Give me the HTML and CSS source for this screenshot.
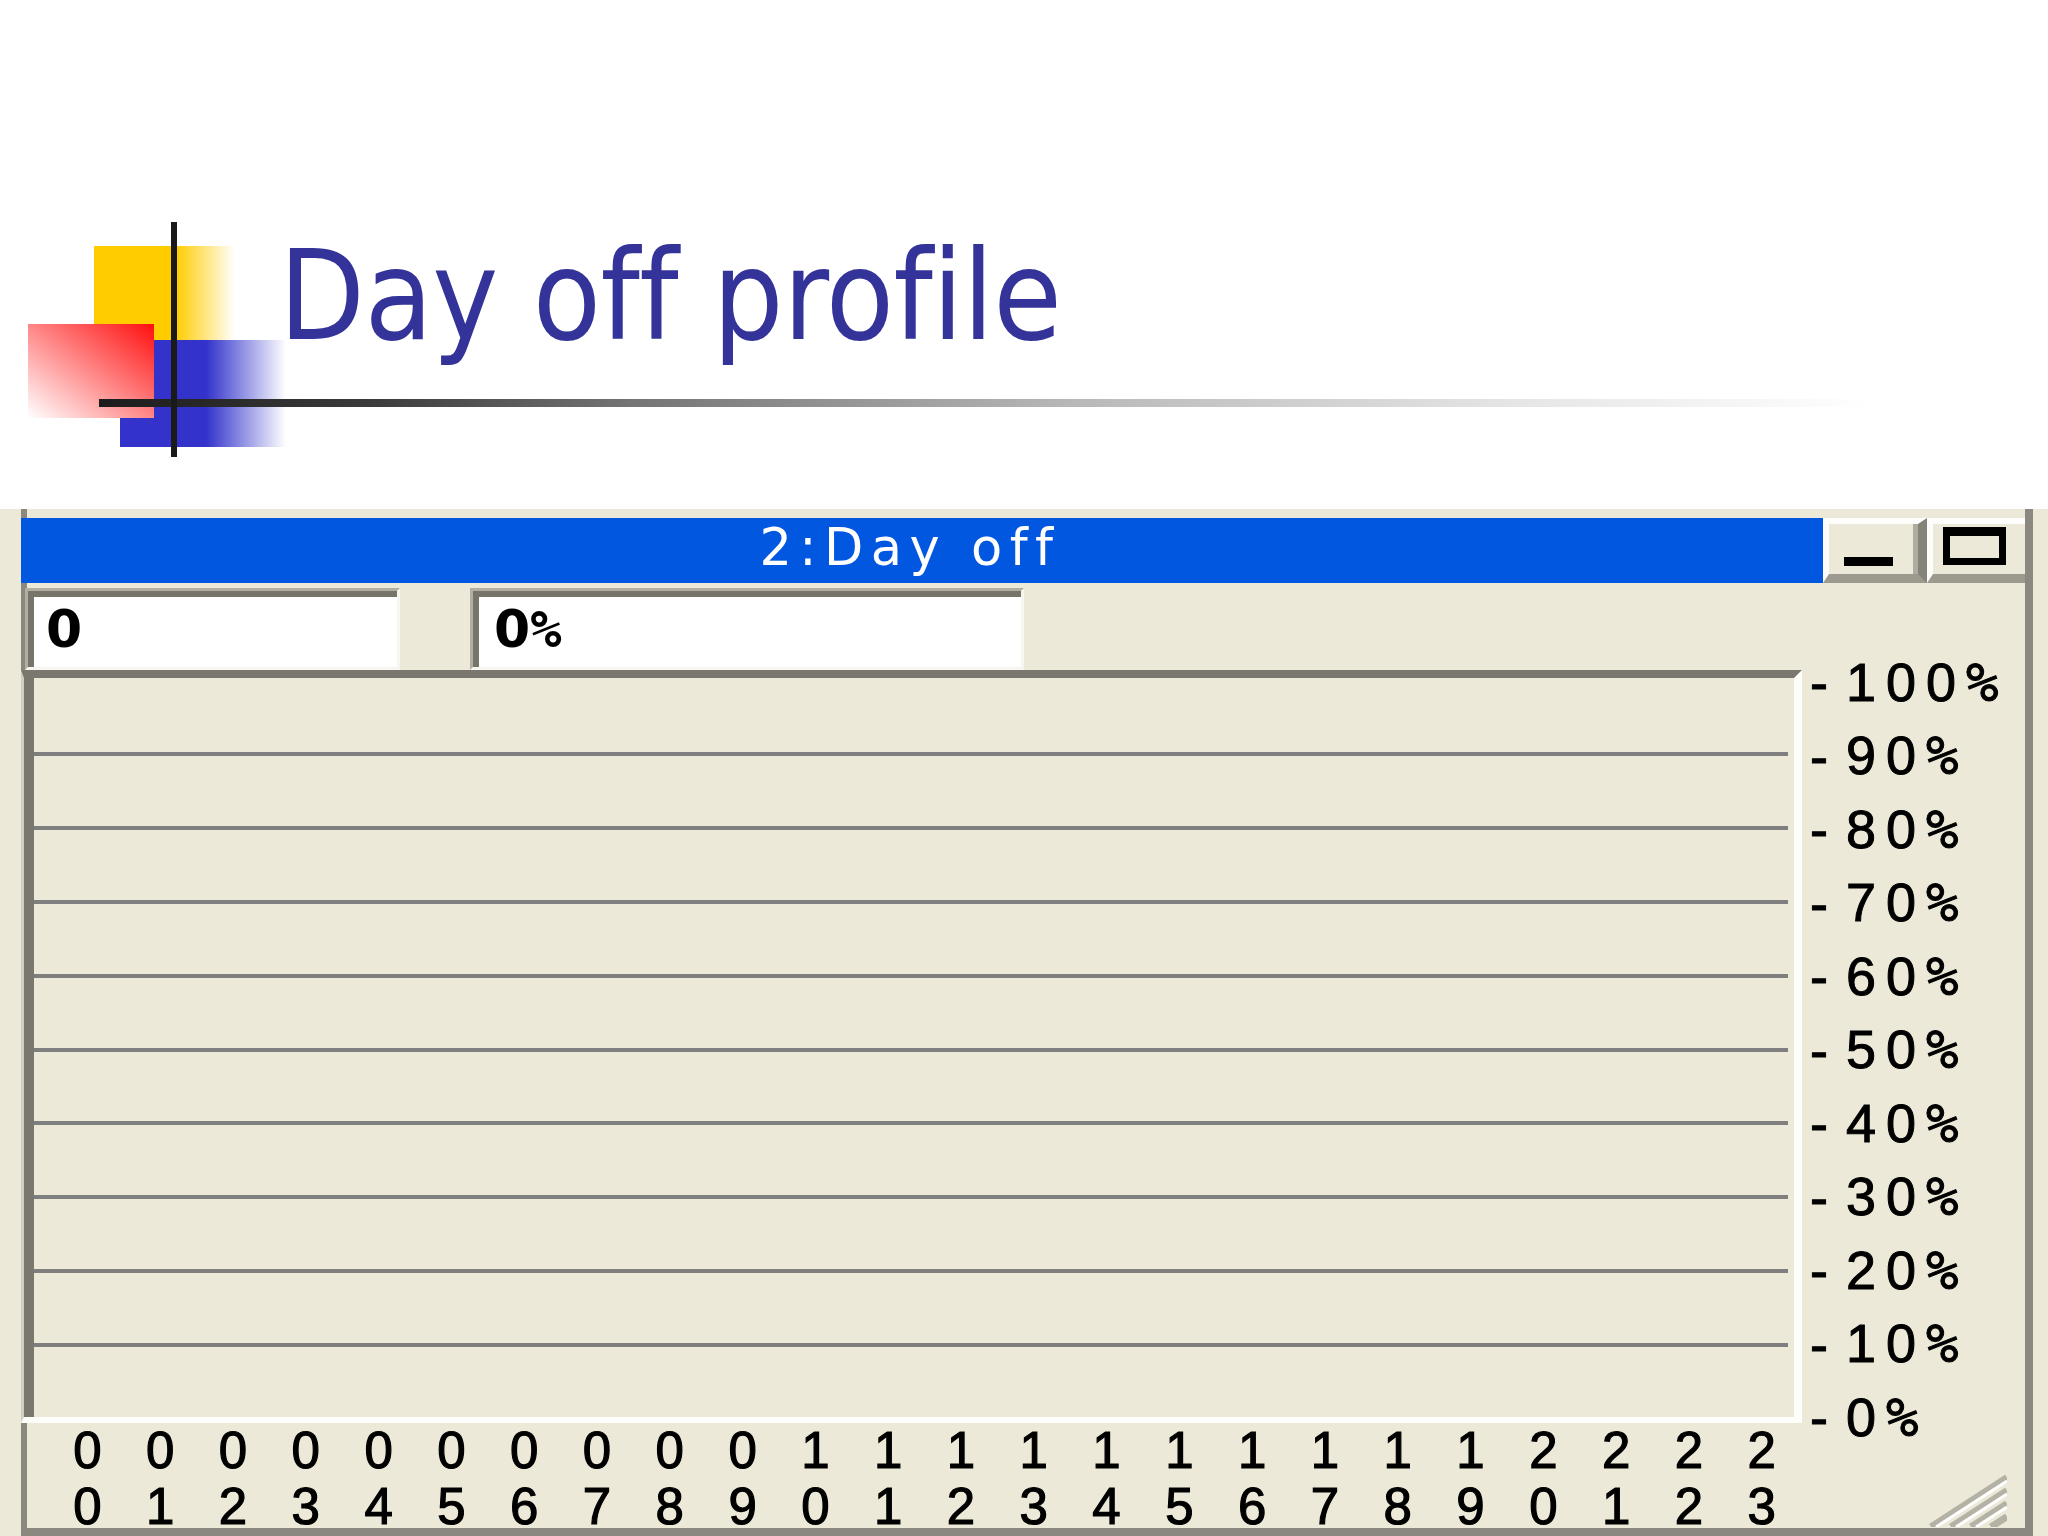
FILE: index.html
```html
<!DOCTYPE html>
<html lang="en">
<head>
<meta charset="utf-8">
<title>Day off profile</title>
<link rel="stylesheet" href="styles.css">
</head>
<body>
<header class="slide-head">
  <svg class="deco" width="1900" height="270" viewBox="0 0 1900 270" aria-hidden="true">
    <defs>
      <linearGradient id="gy" x1="0" y1="0" x2="1" y2="0">
        <stop offset="0" stop-color="#FFCC00"/>
        <stop offset="0.58" stop-color="#FFCC00"/>
        <stop offset="1" stop-color="#FFCC00" stop-opacity="0"/>
      </linearGradient>
      <linearGradient id="gb" x1="0" y1="0" x2="1" y2="0">
        <stop offset="0" stop-color="#3333CC"/>
        <stop offset="0.52" stop-color="#3333CC"/>
        <stop offset="1" stop-color="#3333CC" stop-opacity="0"/>
      </linearGradient>
      <linearGradient id="gr" x1="1" y1="0" x2="0" y2="1">
        <stop offset="0" stop-color="#FF0F0F"/>
        <stop offset="1" stop-color="#FFFFFF"/>
      </linearGradient>
      <linearGradient id="gl" gradientUnits="userSpaceOnUse" x1="99" y1="0" x2="1874" y2="0">
        <stop offset="0" stop-color="#1c1c1c"/>
        <stop offset="0.15" stop-color="#3a3a3a"/>
        <stop offset="0.3" stop-color="#747474"/>
        <stop offset="0.55" stop-color="#b8b8b8"/>
        <stop offset="0.8" stop-color="#e6e6e6"/>
        <stop offset="1" stop-color="#ffffff"/>
      </linearGradient>
    </defs>
    <rect x="94" y="46" width="141" height="94" fill="url(#gy)"/>
    <rect x="120" y="140" width="166" height="107" fill="url(#gb)"/>
    <rect x="28" y="124" width="126" height="94" fill="url(#gr)"/>
    <rect x="99" y="199" width="1775" height="8" fill="url(#gl)"/>
    <rect x="171" y="22" width="6" height="235" fill="#1a1a1a"/>
  </svg>
  <h1 class="slide-title">Day off profile</h1>
</header>

<section class="desk">
  <div class="window">
    <div class="titlerow">
      <div class="titlebar"><span class="caption">2:Day off</span></div>
      <div class="btn btn-min"><span class="min-glyph"></span></div>
      <div class="btn btn-max"><span class="max-glyph"></span></div>
    </div>

    <div class="fields">
      <div class="field f1">0</div>
      <div class="field f2">0<span class="pct">%</span></div>
    </div>

    <div class="plot-row">
      <div class="plot">
        <div class="grid-row"></div>
        <div class="grid-row line"></div>
        <div class="grid-row line"></div>
        <div class="grid-row line"></div>
        <div class="grid-row line"></div>
        <div class="grid-row line"></div>
        <div class="grid-row line"></div>
        <div class="grid-row line"></div>
        <div class="grid-row line"></div>
        <div class="grid-row line"></div>
      </div>
      <div class="yaxis">
        <div class="ylab"><span class="tick">-</span><span class="val">100<span class="pct">%</span></span></div>
        <div class="ylab"><span class="tick">-</span><span class="val">90<span class="pct">%</span></span></div>
        <div class="ylab"><span class="tick">-</span><span class="val">80<span class="pct">%</span></span></div>
        <div class="ylab"><span class="tick">-</span><span class="val">70<span class="pct">%</span></span></div>
        <div class="ylab"><span class="tick">-</span><span class="val">60<span class="pct">%</span></span></div>
        <div class="ylab"><span class="tick">-</span><span class="val">50<span class="pct">%</span></span></div>
        <div class="ylab"><span class="tick">-</span><span class="val">40<span class="pct">%</span></span></div>
        <div class="ylab"><span class="tick">-</span><span class="val">30<span class="pct">%</span></span></div>
        <div class="ylab"><span class="tick">-</span><span class="val">20<span class="pct">%</span></span></div>
        <div class="ylab"><span class="tick">-</span><span class="val">10<span class="pct">%</span></span></div>
        <div class="ylab"><span class="tick">-</span><span class="val">0<span class="pct">%</span></span></div>
      </div>
    </div>

    <div class="xaxis">
      <div class="xrow">
        <span>0</span><span>0</span><span>0</span><span>0</span><span>0</span><span>0</span>
        <span>0</span><span>0</span><span>0</span><span>0</span><span>1</span><span>1</span>
        <span>1</span><span>1</span><span>1</span><span>1</span><span>1</span><span>1</span>
        <span>1</span><span>1</span><span>2</span><span>2</span><span>2</span><span>2</span>
      </div>
      <div class="xrow">
        <span>0</span><span>1</span><span>2</span><span>3</span><span>4</span><span>5</span>
        <span>6</span><span>7</span><span>8</span><span>9</span><span>0</span><span>1</span>
        <span>2</span><span>3</span><span>4</span><span>5</span><span>6</span><span>7</span>
        <span>8</span><span>9</span><span>0</span><span>1</span><span>2</span><span>3</span>
      </div>
    </div>

    <svg class="grip" width="80" height="52" viewBox="0 0 80 52" aria-hidden="true">
      <g stroke-linecap="butt">
        <line x1="4" y1="52" x2="80" y2="2.6" stroke="#b4b1a5" stroke-width="7"/>
        <line x1="9" y1="52" x2="80" y2="5.9" stroke="#ffffff" stroke-width="3"/>
        <line x1="24" y1="52" x2="80" y2="15.6" stroke="#b4b1a5" stroke-width="7"/>
        <line x1="29" y1="52" x2="80" y2="18.9" stroke="#ffffff" stroke-width="3"/>
        <line x1="44" y1="52" x2="80" y2="28.6" stroke="#b4b1a5" stroke-width="7"/>
        <line x1="49" y1="52" x2="80" y2="31.9" stroke="#ffffff" stroke-width="3"/>
        <line x1="64" y1="52" x2="80" y2="41.6" stroke="#b4b1a5" stroke-width="7"/>
      </g>
    </svg>
  </div>
</section>
</body>
</html>
```

FILE: styles.css
```css
html, body {
  margin: 0;
  padding: 0;
}

body {
  width: 2048px;
  height: 1536px;
  overflow: hidden;
  background: #ffffff;
}

/* ---------- slide heading ---------- */
.slide-head {
  display: grid;
  height: 509px;
}

.deco {
  grid-area: 1 / 1;
  display: block;
  margin-top: 200px;
}

.slide-title {
  grid-area: 1 / 1;
  align-self: start;
  justify-self: start;
  margin: 234px 0 0 279px;
  font-family: "DejaVu Sans Condensed", "DejaVu Sans", sans-serif;
  font-weight: normal;
  font-size: 124px;
  line-height: 124px;
  letter-spacing: -0.5px;
  font-variant-ligatures: none;
  font-feature-settings: "liga" 0, "clig" 0;
  color: #333399;
  white-space: nowrap;
}

/* ---------- XP style window ---------- */
.desk {
  box-sizing: border-box;
  height: 1027px;
  padding-left: 21px;
  background: #ECE9D8;
}

.window {
  position: relative;
  box-sizing: border-box;
  width: 2012px;
  height: 1027px;
  padding-top: 9px;
  border-left: 6px solid #8b897f;
  border-right: 8px solid #8b897f;
  border-bottom: 8px solid #8b897f;
}

.titlerow {
  display: flex;
  height: 65px;
  margin-left: -6px;
}

.titlebar {
  flex: 1;
  display: flex;
  align-items: center;
  justify-content: center;
  padding-right: 24px;
  background: #0257E1;
}

.caption {
  color: #ffffff;
  font-family: "DejaVu Sans", sans-serif;
  font-size: 51px;
  line-height: 51px;
  letter-spacing: 7.5px;
  margin-top: -6px;
}

.btn {
  box-sizing: border-box;
  height: 65px;
  background: #ECE9D8;
  border-top: 6px solid #fdfdfb;
  border-left: 6px solid #fdfdfb;
  border-bottom: 9px solid #9c9a8e;
}

.btn-min {
  width: 104px;
  padding: 33px 0 0 15px;
  border-right: 9px solid #85837a;
  box-shadow: inset -5px 0 0 #aeaca0;
}

.min-glyph {
  display: block;
  width: 49px;
  height: 9px;
  background: #000000;
}

.btn-max {
  width: 98px;
  padding: 3px 0 0 10px;
}

.max-glyph {
  display: block;
  box-sizing: border-box;
  width: 63px;
  height: 38px;
  border: 7px solid #000000;
  border-top-width: 9px;
}

/* ---------- value fields ---------- */
.fields {
  display: flex;
  height: 82px;
  margin-top: 5px;
  margin-left: -2px;
}

.field {
  box-sizing: border-box;
  height: 82px;
  display: flex;
  align-items: center;
  padding-left: 18px;
  background: #ffffff;
  border: 3px solid;
  border-color: #b2afa2 #f7f6f0 #f7f6f0 #b2afa2;
  box-shadow: inset 6px 6px 0 #777569;
  color: #000000;
  font-family: "DejaVu Sans", sans-serif;
  font-weight: bold;
  font-size: 52px;
  line-height: 52px;
}

.f1 { width: 375px; }
.f2 { width: 554px; margin-left: 70px; padding-left: 21px; }

.pct {
  font-family: "DejaVu Sans Mono", monospace;
}

/* ---------- plot ---------- */
.plot-row {
  display: flex;
  align-items: flex-start;
  height: 753px;
  margin-left: -6px;
}

.plot {
  box-sizing: border-box;
  width: 1781px;
  height: 753px;
  display: grid;
  grid-template-rows: repeat(10, 1fr);
  background: #ECE9D8;
  border-top: 8px solid #7a786e;
  border-left: 3px solid #d2cfc2;
  border-right: 8px solid #fdfdfa;
  border-bottom: 6px solid #fdfdfa;
  box-shadow: inset 10px 0 0 #7a786e;
}

.grid-row {
  margin: 0 6px 0 10px;
}

.grid-row.line {
  border-top: 4px solid #7f7f7f;
}

.yaxis {
  display: flex;
  flex-direction: column;
  margin-top: -24.75px;
  margin-bottom: -30.75px;
  padding-left: 8px;
}

.ylab {
  height: 73.5px;
  display: flex;
  align-items: center;
  font-family: "Liberation Sans", Arial, sans-serif;
  font-size: 54px;
  line-height: 54px;
  color: #000000;
  -webkit-text-stroke: 1px #000000;
  white-space: nowrap;
}

.tick {
  width: 36px;
}

.val {
  letter-spacing: 10px;
}

/* ---------- hour axis ---------- */
.xaxis {
  padding-left: 24px;
  font-family: "Liberation Sans", Arial, sans-serif;
  font-size: 51px;
  line-height: 56px;
  color: #000000;
  -webkit-text-stroke: 1.2px #000000;
}

.xrow {
  display: grid;
  grid-template-columns: repeat(24, 72.8px);
  height: 56px;
}

.xrow span {
  text-align: center;
}

/* resize grip sits over the window corner */
.grip {
  position: absolute;
  right: 18px;
  bottom: 1px;
  display: block;
}
```
